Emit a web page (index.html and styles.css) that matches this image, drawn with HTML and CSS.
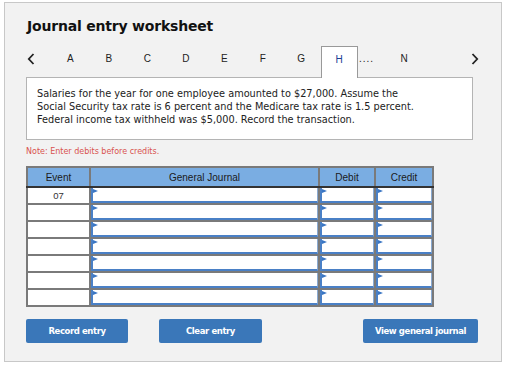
FILE: index.html
```html
<!DOCTYPE html>
<html>
<head>
  <meta charset="utf-8">
  <title>Journal entry worksheet</title>
  <link rel="stylesheet" href="styles.css">
</head>

<body>
  <div class="panel">
    <h1 class="title">Journal entry worksheet</h1>

    <div class="tabs">
      <span class="arrow prev">
        <svg width="8" height="12" viewBox="0 0 8 12"><path d="M6.5 1 L1.8 6 L6.5 11" fill="none" stroke="#222" stroke-width="1.8"/></svg>
      </span>
      <span class="tab">A</span>
      <span class="tab">B</span>
      <span class="tab">C</span>
      <span class="tab">D</span>
      <span class="tab">E</span>
      <span class="tab">F</span>
      <span class="tab">G</span>
      <span class="tab active">H</span>
      <span class="dots">....</span>
      <span class="tab last">N</span>
      <span class="arrow next">
        <svg width="8" height="12" viewBox="0 0 8 12"><path d="M1.5 1 L6.2 6 L1.5 11" fill="none" stroke="#222" stroke-width="1.8"/></svg>
      </span>
    </div>

    <div class="prompt">
      Salaries for the year for one employee amounted to $27,000. Assume the<br>
      Social Security tax rate is 6 percent and the Medicare tax rate is 1.5 percent.<br>
      Federal income tax withheld was $5,000. Record the transaction.
    </div>

    <p class="note">Note: Enter debits before credits.</p>

    <table class="journal">
      <thead>
        <tr>
          <th class="col-event">Event</th>
          <th class="col-account">General Journal</th>
          <th class="col-debit">Debit</th>
          <th class="col-credit">Credit</th>
        </tr>
      </thead>
      <tbody>
        <tr>
          <td class="event">07</td>
          <td><div class="field"></div></td>
          <td><div class="field"></div></td>
          <td><div class="field"></div></td>
        </tr>
        <tr>
          <td class="event"></td>
          <td><div class="field"></div></td>
          <td><div class="field"></div></td>
          <td><div class="field"></div></td>
        </tr>
        <tr>
          <td class="event"></td>
          <td><div class="field"></div></td>
          <td><div class="field"></div></td>
          <td><div class="field"></div></td>
        </tr>
        <tr>
          <td class="event"></td>
          <td><div class="field"></div></td>
          <td><div class="field"></div></td>
          <td><div class="field"></div></td>
        </tr>
        <tr>
          <td class="event"></td>
          <td><div class="field"></div></td>
          <td><div class="field"></div></td>
          <td><div class="field"></div></td>
        </tr>
        <tr>
          <td class="event"></td>
          <td><div class="field"></div></td>
          <td><div class="field"></div></td>
          <td><div class="field"></div></td>
        </tr>
        <tr>
          <td class="event"></td>
          <td><div class="field"></div></td>
          <td><div class="field"></div></td>
          <td><div class="field"></div></td>
        </tr>
      </tbody>
    </table>

    <div class="actions">
      <button class="btn btn-record">Record entry</button>
      <button class="btn btn-clear">Clear entry</button>
      <button class="btn btn-view">View general journal</button>
    </div>
  </div>
</body>

</html>
```

FILE: styles.css
```css
body {
  margin: 0;
  background: #fff;
  font-family: "DejaVu Sans", Verdana, sans-serif;
  color: #222;
}

.panel {
  box-sizing: border-box;
  margin: 2px 0 0 4px;
  width: 498px;
  height: 360px;
  padding: 13px 0 0 21px;
  background: #f2f2f2;
  border: 1px solid #c8c8c8;
}

.title {
  margin: 0 0 0 1px;
  font-size: 14px;
  line-height: 20px;
  font-weight: bold;
  letter-spacing: -0.2px;
  color: #111;
}

.tabs {
  display: flex;
  align-items: stretch;
  height: 31px;
  margin-top: 10px;
  font-family: "Liberation Sans", Arial, sans-serif;
  font-size: 10px;
  color: #222;
  position: relative;
  z-index: 1;
}

.tabs span {
  display: flex;
  align-items: center;
  justify-content: center;
  padding-bottom: 6px;
  box-sizing: border-box;
}

.prev {
  width: 25px;
  justify-content: flex-start !important;
  padding-left: 1px;
}

.next {
  margin-left: 44px;
}

.tab {
  width: 38.5px;
}

.tab.active {
  width: 37px;
  margin-right: 1.5px;
  background: #fff;
  border: 1px solid #999;
  border-bottom: none;
  color: #1b3f94;
  height: 32px;
}

.dots {
  width: 22px;
  justify-content: flex-start !important;
  letter-spacing: 1px;
}

.tab.last {
  width: 46px;
}

.prompt {
  box-sizing: border-box;
  width: 447px;
  height: 63px;
  padding: 9px 10px 0;
  background: #fff;
  border: 1px solid #b4b4b4;
  font-size: 9.75px;
  line-height: 13px;
  color: #222;
  white-space: nowrap;
}

.note {
  margin: 7px 0 0;
  font-size: 8px;
  line-height: 10px;
  color: #d9534f;
}

.journal {
  margin-top: 9px;
  width: 406px;
  border-collapse: collapse;
  border: 2px solid #7a7a7a;
  font-family: "Liberation Sans", Arial, sans-serif;
  font-size: 10px;
  table-layout: fixed;
}

.journal th {
  height: 18px;
  padding: 0;
  background: #7aade2;
  border: 2px solid #7a7a7a;
  border-bottom: 2px solid #333;
  border-left-color: #333;
  font-weight: normal;
  color: #1a1a1a;
}

.journal th:first-child {
  border-left-color: #7a7a7a;
}

.col-event { width: 61px; }
.col-account { width: 227px; }
.col-debit { width: 54px; }
.col-credit { width: 56px; }

.journal td {
  height: 15px;
  padding: 0;
  background: #fff;
  border: 2px solid #7a7a7a;
  vertical-align: top;
}

.journal td.event {
  text-align: center;
  vertical-align: middle;
  color: #333;
  font-size: 9.5px;
}

.field {
  position: relative;
  box-sizing: border-box;
  height: 15px;
  border-left: 2px solid #4a80c6;
  border-bottom: 2px solid #4a80c6;
  border-right: 1px solid #8aaad2;
}

.field::before {
  content: "";
  position: absolute;
  left: 0;
  top: 1px;
  border-left: 5px solid #3a76c4;
  border-top: 2.5px solid transparent;
  border-bottom: 2.5px solid transparent;
}

.actions {
  display: flex;
  margin-top: 12px;
  width: 452px;
}

.btn {
  height: 24px;
  padding: 0;
  border: none;
  border-radius: 2px;
  background: #3a77b9;
  color: #fff;
  font-family: "DejaVu Sans", Verdana, sans-serif;
  font-size: 8.5px;
  font-weight: bold;
  letter-spacing: -0.4px;
}

.btn-record { width: 102px; }
.btn-clear { width: 103px; margin-left: 31px; }
.btn-view { width: 115px; margin-left: auto; }
```
